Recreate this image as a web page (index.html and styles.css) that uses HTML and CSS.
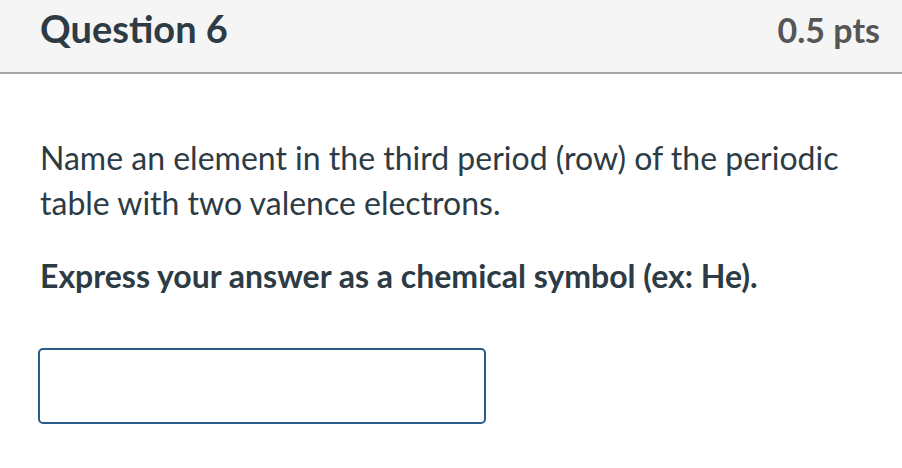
FILE: index.html
```html
<!DOCTYPE html>
<html>
<head>
<meta charset="utf-8">
<link rel="stylesheet" href="styles.css">
</head>
<body>
<div class="question">
  <div class="header">
    <span class="title">Question 6</span>
    <span class="pts">0.5 pts</span>
  </div>
  <div class="content">
    <p class="text">Name an element in the third period (row) of the periodic table with two valence electrons.</p>
    <p class="text bold">Express your answer as a chemical symbol (ex: He).</p>
    <input class="answer" type="text">
  </div>
</div>
</body>
</html>
```
FILE: styles.css
```css
html, body {
  margin: 0;
  padding: 0;
  background: #fff;
}
body {
  font-family: Lato, "Noto Sans", sans-serif;
  color: #2d3b45;
}
.header {
  height: 72px;
  box-sizing: border-box;
  background: #f5f5f5;
  border-bottom: 2px solid #a5a5a5;
  display: flex;
  align-items: baseline;
  justify-content: space-between;
  padding: 5px 22px 0 40px;
  height: 74px;
}
.title {
  font-size: 38px;
  line-height: 46px;
  font-weight: 700;
  color: #2d3b45;
}
.pts {
  font-size: 34px;
  line-height: 46px;
  font-weight: 700;
  color: #565656;
}
.content {
  padding: 61px 40px 0 40px;
}
.text {
  font-size: 32px;
  line-height: 45px;
  margin: 0 0 28px 0;
  max-width: 810px;
}
.bold {
  font-weight: 700;
}
.answer {
  display: block;
  margin-top: 50px;
  margin-left: -2px;
  width: 448px;
  height: 76px;
  box-sizing: border-box;
  border: 2px solid #2a5c8a;
  border-radius: 5px;
  background: #fff;
  font-family: inherit;
  font-size: 24px;
  outline: none;
}
```
